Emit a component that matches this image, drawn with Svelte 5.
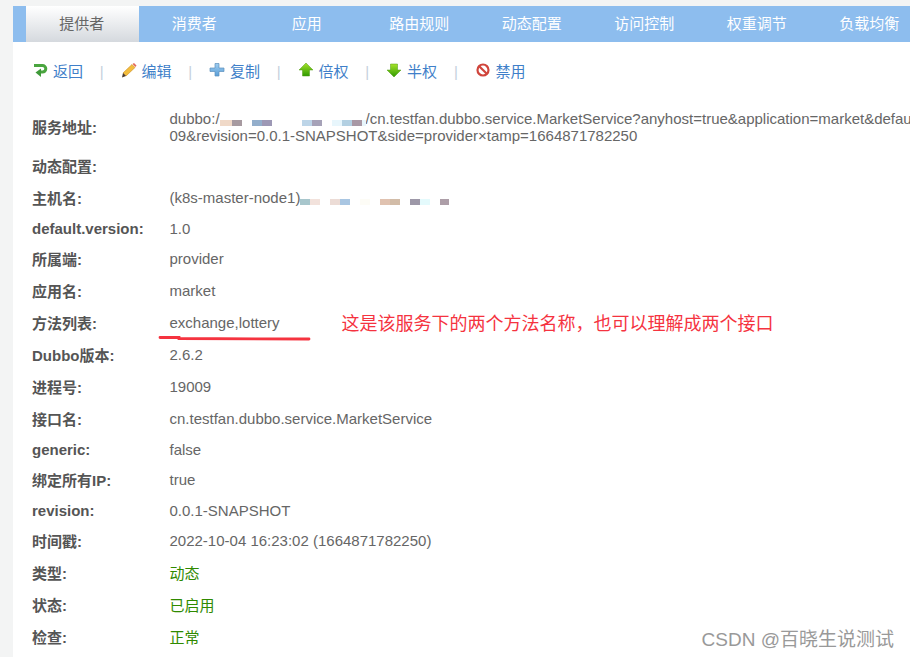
<script>
  const tabs = ["提供者", "消费者", "应用", "路由规则", "动态配置", "访问控制", "权重调节", "负载均衡"];
  const rows = [
    { label: "动态配置:", value: "", h: 32 },
    { label: "主机名:", value: "(k8s-master-node1", blur: true, h: 32 },
    { label: "default.version:", value: "1.0", h: 30 },
    { label: "所属端:", value: "provider", h: 31 },
    { label: "应用名:", value: "market", h: 32 },
    { label: "方法列表:", value: "exchange,lottery", note: true, h: 32 },
    { label: "Dubbo版本:", value: "2.6.2", h: 32 },
    { label: "进程号:", value: "19009", h: 33 },
    { label: "接口名:", value: "cn.testfan.dubbo.service.MarketService", h: 31 },
    { label: "generic:", value: "false", h: 30 },
    { label: "绑定所有IP:", value: "true", h: 31 },
    { label: "revision:", value: "0.0.1-SNAPSHOT", h: 30 },
    { label: "时间戳:", value: "2022-10-04 16:23:02 (1664871782250)", h: 31 },
    { label: "类型:", value: "动态", ok: true, h: 32 },
    { label: "状态:", value: "已启用", ok: true, h: 32 },
    { label: "检查:", value: "正常", ok: true, h: 32 }
  ];
  const addrBlur = [
    [0, 12, "#f0d9c8"], [12, 10, "#a79aa0"], [32, 10, "#93aecb"], [42, 10, "#9d98b5"],
    [82, 10, "#bdd5e8"], [92, 10, "#a6a2b8"], [112, 10, "#e8f6fc"], [122, 10, "#b3d0e2"],
    [132, 10, "#a898a5"], [142, 4, "#e8f6fc"]
  ];
  const hostBlur = [
    [0, 10, "#a8c6cc"], [10, 10, "#f2e2dc"], [30, 10, "#ecdcd6"], [40, 10, "#a9c6e2"],
    [60, 10, "#fdfcf6"], [80, 10, "#e0c2b0"], [90, 10, "#d2bca8"], [110, 10, "#9d98a8"],
    [120, 10, "#e4fafc"], [140, 9, "#ad9ea8"]
  ];
</script>

{#snippet blur(list, width)}
  <span class="blur" style="width:{width}px">
    {#each list as b}
      <i style="left:{b[0]}px;width:{b[1]}px;background:{b[2]}"></i>
    {/each}
  </span>
{/snippet}

<div class="page">
  <ul class="tabs">
    {#each tabs as tab, i}
      <li class:active={i === 0}>{tab}</li>
    {/each}
  </ul>

  <div class="toolbar">
    <svg class="defs" width="0" height="0">
      <defs>
        <linearGradient id="up" x1="0" y1="0" x2="0" y2="1">
          <stop offset="0" stop-color="#a6e32a" />
          <stop offset="1" stop-color="#2f9a00" />
        </linearGradient>
        <linearGradient id="plus" x1="0" y1="0" x2="0" y2="1">
          <stop offset="0" stop-color="#9fcdf0" />
          <stop offset="1" stop-color="#5a9fd8" />
        </linearGradient>
      </defs>
    </svg>
    <a href="#back">
      <svg viewBox="0 0 16 16" width="16" height="16">
        <path d="M2 3.500h8.500a3.300 3.300 0 0 1 0 6.600H7" fill="none" stroke="#4aa53f" stroke-width="3" />
        <path d="M9 6.500v8.500L3.500 10.500z" fill="#3f9a3a" />
      </svg>
      返回
    </a>
    <span class="sep">|</span>
    <a href="#edit">
      <svg viewBox="0 0 16 16" width="16" height="16">
        <path d="M2 11 11 2.500l3 3L5 14z" fill="#f3bd3c" stroke="#c98a1e" stroke-width=".6" />
        <path d="M11.500 2l1.500-1 2.500 2.500-1 1.500z" fill="#e2685a" />
        <path d="M2 11l3 3-4 1.500z" fill="#4a3a30" />
      </svg>
      编辑
    </a>
    <span class="sep">|</span>
    <a href="#copy">
      <svg viewBox="0 0 16 16" width="16" height="16">
        <path d="M6 1.500h4v4.500h5v3.500h-5V14H6V9.500H1V6h5z" fill="url(#plus)" stroke="#5b8fbb" stroke-width=".7" />
      </svg>
      复制
    </a>
    <span class="sep">|</span>
    <a href="#up">
      <svg viewBox="0 0 16 16" width="16" height="16">
        <path d="M8 1l7 7h-3.500v6h-7V8H1z" fill="url(#up)" stroke="#4f9a10" stroke-width=".5" />
      </svg>
      倍权
    </a>
    <span class="sep">|</span>
    <a href="#down">
      <svg viewBox="0 0 16 16" width="16" height="16">
        <path d="M8 15l7-7h-3.500V2h-7v6H1z" fill="url(#up)" stroke="#4f9a10" stroke-width=".5" />
      </svg>
      半权
    </a>
    <span class="sep">|</span>
    <a href="#off">
      <svg viewBox="0 0 16 16" width="16" height="16">
        <circle cx="8" cy="8" r="5.500" fill="#fff" stroke="#d0453c" stroke-width="2.200" />
        <path d="M4.200 4.200l7.600 7.600" stroke="#d0453c" stroke-width="2.200" />
      </svg>
      禁用
    </a>
  </div>

  <div class="details">
    <div class="row addr">
      <div class="label">服务地址:</div>
      <div class="value">
        <div class="line">dubbo:/{@render blur(addrBlur, 146)}/cn.testfan.dubbo.service.MarketService?anyhost=true&amp;application=market&amp;default.version=1.0</div>
        <div class="line">09&amp;revision=0.0.1-SNAPSHOT&amp;side=provider×tamp=1664871782250</div>
      </div>
    </div>
    {#each rows as row}
      <div class="row" style="height:{row.h}px">
        <div class="label">{row.label}</div>
        <div class="value" class:ok={row.ok}>
          {row.value}{#if row.blur}){@render blur(hostBlur, 149)}{/if}
          {#if row.note}
            <svg class="underline" width="155" height="6" viewBox="0 0 155 6">
              <path d="M2 2.500h19v1L151 4" fill="none" stroke="#f5333f" stroke-width="2.800" stroke-linecap="round" />
            </svg>
            <span class="note">这是该服务下的两个方法名称，也可以理解成两个接口</span>
          {/if}
        </div>
      </div>
    {/each}
  </div>

  <div class="mark">CSDN @百晓生说测试</div>
</div>

<style>
  :global(body) {
    margin: 0;
    background: #f3f4f4;
  }
  .page {
    position: relative;
    width: 897px;
    height: 657px;
    margin-left: 13px;
    padding-top: 6px;
    box-sizing: border-box;
    overflow: hidden;
    background: linear-gradient(#f3f4f4 6px, #fff 6px);
    font-family: "Liberation Sans", "Noto Sans CJK SC", sans-serif;
    font-size: 15px;
    color: #666;
  }
  .tabs {
    display: flex;
    height: 36px;
    margin: 0;
    padding: 0 0 0 13px;
    list-style: none;
    background: #8dbdee;
  }
  .tabs li {
    flex: 0 0 112.500px;
    box-sizing: border-box;
    padding-right: 1px;
    line-height: 35px;
    text-align: center;
    color: #fff;
    white-space: nowrap;
  }
  .tabs li.active {
    color: #666;
    background: linear-gradient(#fff, #d5d9de);
  }
  .toolbar {
    display: flex;
    align-items: center;
    height: 56px;
    margin-bottom: 2px;
    padding-left: 19px;
  }
  .defs {
    position: absolute;
  }
  .toolbar a {
    display: flex;
    align-items: center;
    gap: 5px;
    color: #3f7fc9;
    text-decoration: none;
    white-space: nowrap;
  }
  .sep {
    width: 37.500px;
    margin-top: 3px;
    text-align: center;
    color: #c4cfdc;
  }
  .row {
    display: flex;
    align-items: center;
    padding-left: 19px;
  }
  .addr {
    height: 49px;
    align-items: flex-start;
    padding-top: 10px;
    box-sizing: border-box;
  }
  .addr .label {
    padding-top: 6px;
  }
  .label {
    flex: 0 0 137.500px;
    font-weight: bold;
    color: #555;
    white-space: nowrap;
  }
  .value {
    position: relative;
    white-space: nowrap;
  }
  .line {
    line-height: 17px;
  }
  .ok {
    color: #2f8a00;
  }
  .blur {
    display: inline-block;
    position: relative;
    height: 6px;
    vertical-align: -2px;
  }
  .blur i {
    position: absolute;
    top: 0;
    height: 6px;
  }
  .underline {
    position: absolute;
    left: -12px;
    bottom: -10px;
  }
  .note {
    position: absolute;
    left: 172px;
    top: -2px;
    font-size: 18px;
    line-height: 24px;
    color: #f5333f;
  }
  .mark {
    position: absolute;
    right: 16px;
    bottom: 6px;
    font-size: 19px;
    color: #999;
  }
</style>
